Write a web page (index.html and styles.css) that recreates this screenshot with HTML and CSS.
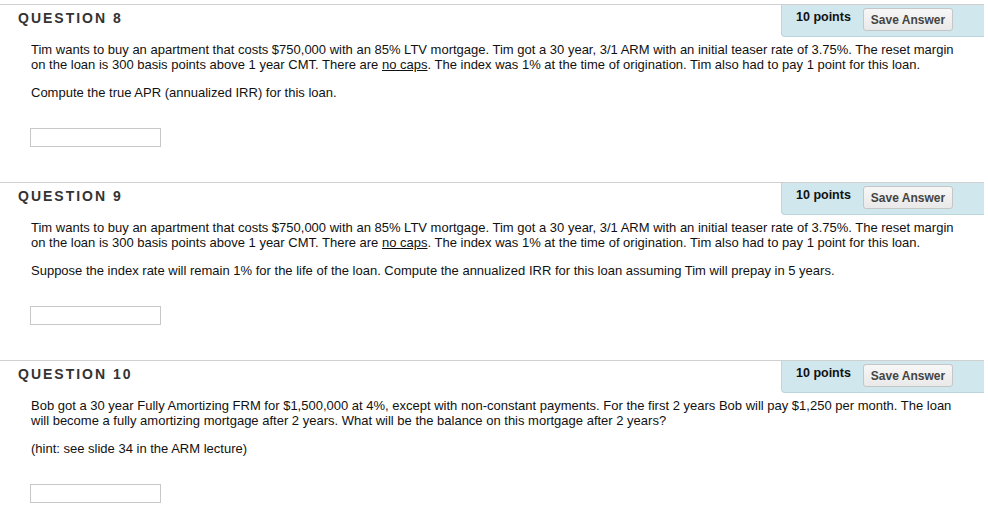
FILE: index.html
```html
<!DOCTYPE html>
<html>
<head>
<meta charset="utf-8">
<link rel="stylesheet" href="styles.css">
</head>
<body>
<div class="page">
  <section class="question">
    <div class="q-head">
      <h3 class="q-title">QUESTION 8</h3>
      <div class="points-box">
        <span class="points">10 points</span>
        <button class="save-btn">Save Answer</button>
      </div>
    </div>
    <div class="q-body">
      <p>Tim wants to buy an apartment that costs $750,000 with an 85% LTV mortgage. Tim got a 30 year, 3/1 ARM with an initial teaser rate of 3.75%. The reset margin on the loan is 300 basis points above 1 year CMT. There are <u>no caps</u>. The index was 1% at the time of origination. Tim also had to pay 1 point for this loan.</p>
      <p>Compute the true APR (annualized IRR) for this loan.</p>
      <div class="answer"><input class="answer-input" type="text"></div>
    </div>
  </section>
  <section class="question">
    <div class="q-head">
      <h3 class="q-title">QUESTION 9</h3>
      <div class="points-box">
        <span class="points">10 points</span>
        <button class="save-btn">Save Answer</button>
      </div>
    </div>
    <div class="q-body">
      <p>Tim wants to buy an apartment that costs $750,000 with an 85% LTV mortgage. Tim got a 30 year, 3/1 ARM with an initial teaser rate of 3.75%. The reset margin on the loan is 300 basis points above 1 year CMT. There are <u>no caps</u>. The index was 1% at the time of origination. Tim also had to pay 1 point for this loan.</p>
      <p>Suppose the index rate will remain 1% for the life of the loan. Compute the annualized IRR for this loan assuming Tim will prepay in 5 years.</p>
      <div class="answer"><input class="answer-input" type="text"></div>
    </div>
  </section>
  <section class="question">
    <div class="q-head">
      <h3 class="q-title">QUESTION 10</h3>
      <div class="points-box">
        <span class="points">10 points</span>
        <button class="save-btn">Save Answer</button>
      </div>
    </div>
    <div class="q-body">
      <p>Bob got a 30 year Fully Amortizing FRM for $1,500,000 at 4%, except with non-constant payments. For the first 2 years Bob will pay $1,250 per month. The loan will become a fully amortizing mortgage after 2 years. What will be the balance on this mortgage after 2 years?</p>
      <p>(hint: see slide 34 in the ARM lecture)</p>
      <div class="answer"><input class="answer-input" type="text"></div>
    </div>
  </section>
</div>
</body>
</html>
```

FILE: styles.css
```css
html, body {
  margin: 0;
  padding: 0;
  background: #ffffff;
}

body {
  font-family: "Liberation Sans", Arial, Helvetica, sans-serif;
  color: #111111;
}

.page {
  padding-top: 4px;
  width: 984px;
}

.question {
  border-top: 1px solid #d0d0d0;
  padding-bottom: 35px;
}

.q-head {
  display: flex;
  justify-content: space-between;
  align-items: flex-start;
}

.q-title {
  margin: 0;
  padding: 5px 0 0 18px;
  font-size: 14px;
  line-height: 16px;
  font-weight: bold;
  letter-spacing: 2px;
  color: #333333;
}

.points-box {
  display: flex;
  align-items: center;
  height: 31px;
  box-sizing: content-box;
  width: 157px;
  padding: 0 31px 0 14px;
  background: #cfe7ed;
  border-left: 1px solid #bcd6dd;
  border-bottom: 1px solid #bcd6dd;
  border-bottom-left-radius: 4px;
}

.points {
  align-self: flex-start;
  margin-top: 5px;
  font-size: 12.5px;
  line-height: 14px;
  font-weight: bold;
  color: #111111;
  margin-right: 12px;
  white-space: nowrap;
}

.save-btn {
  font-family: "Liberation Sans", Arial, Helvetica, sans-serif;
  font-size: 12px;
  font-weight: bold;
  color: #444444;
  height: 23px;
  width: 92px;
  padding: 0;
  margin-top: -2px;
  border: 1px solid #c6c6c6;
  border-radius: 3px;
  background: linear-gradient(#f7f7f7, #e9e9e9);
  white-space: nowrap;
}

.q-body {
  display: flex;
  flex-direction: column;
  gap: 13px;
  padding: 5px 22px 0 31px;
}

.q-body p {
  margin: 0;
  font-size: 13px;
  line-height: 15px;
}

.answer {
  margin-top: 15px;
  height: 19px;
}

.answer-input {
  display: block;
  box-sizing: border-box;
  width: 131px;
  height: 19px;
  margin: 0 0 0 -1px;
  padding: 0;
  border: 1px solid #c8c8c8;
  background: #ffffff;
}
```
